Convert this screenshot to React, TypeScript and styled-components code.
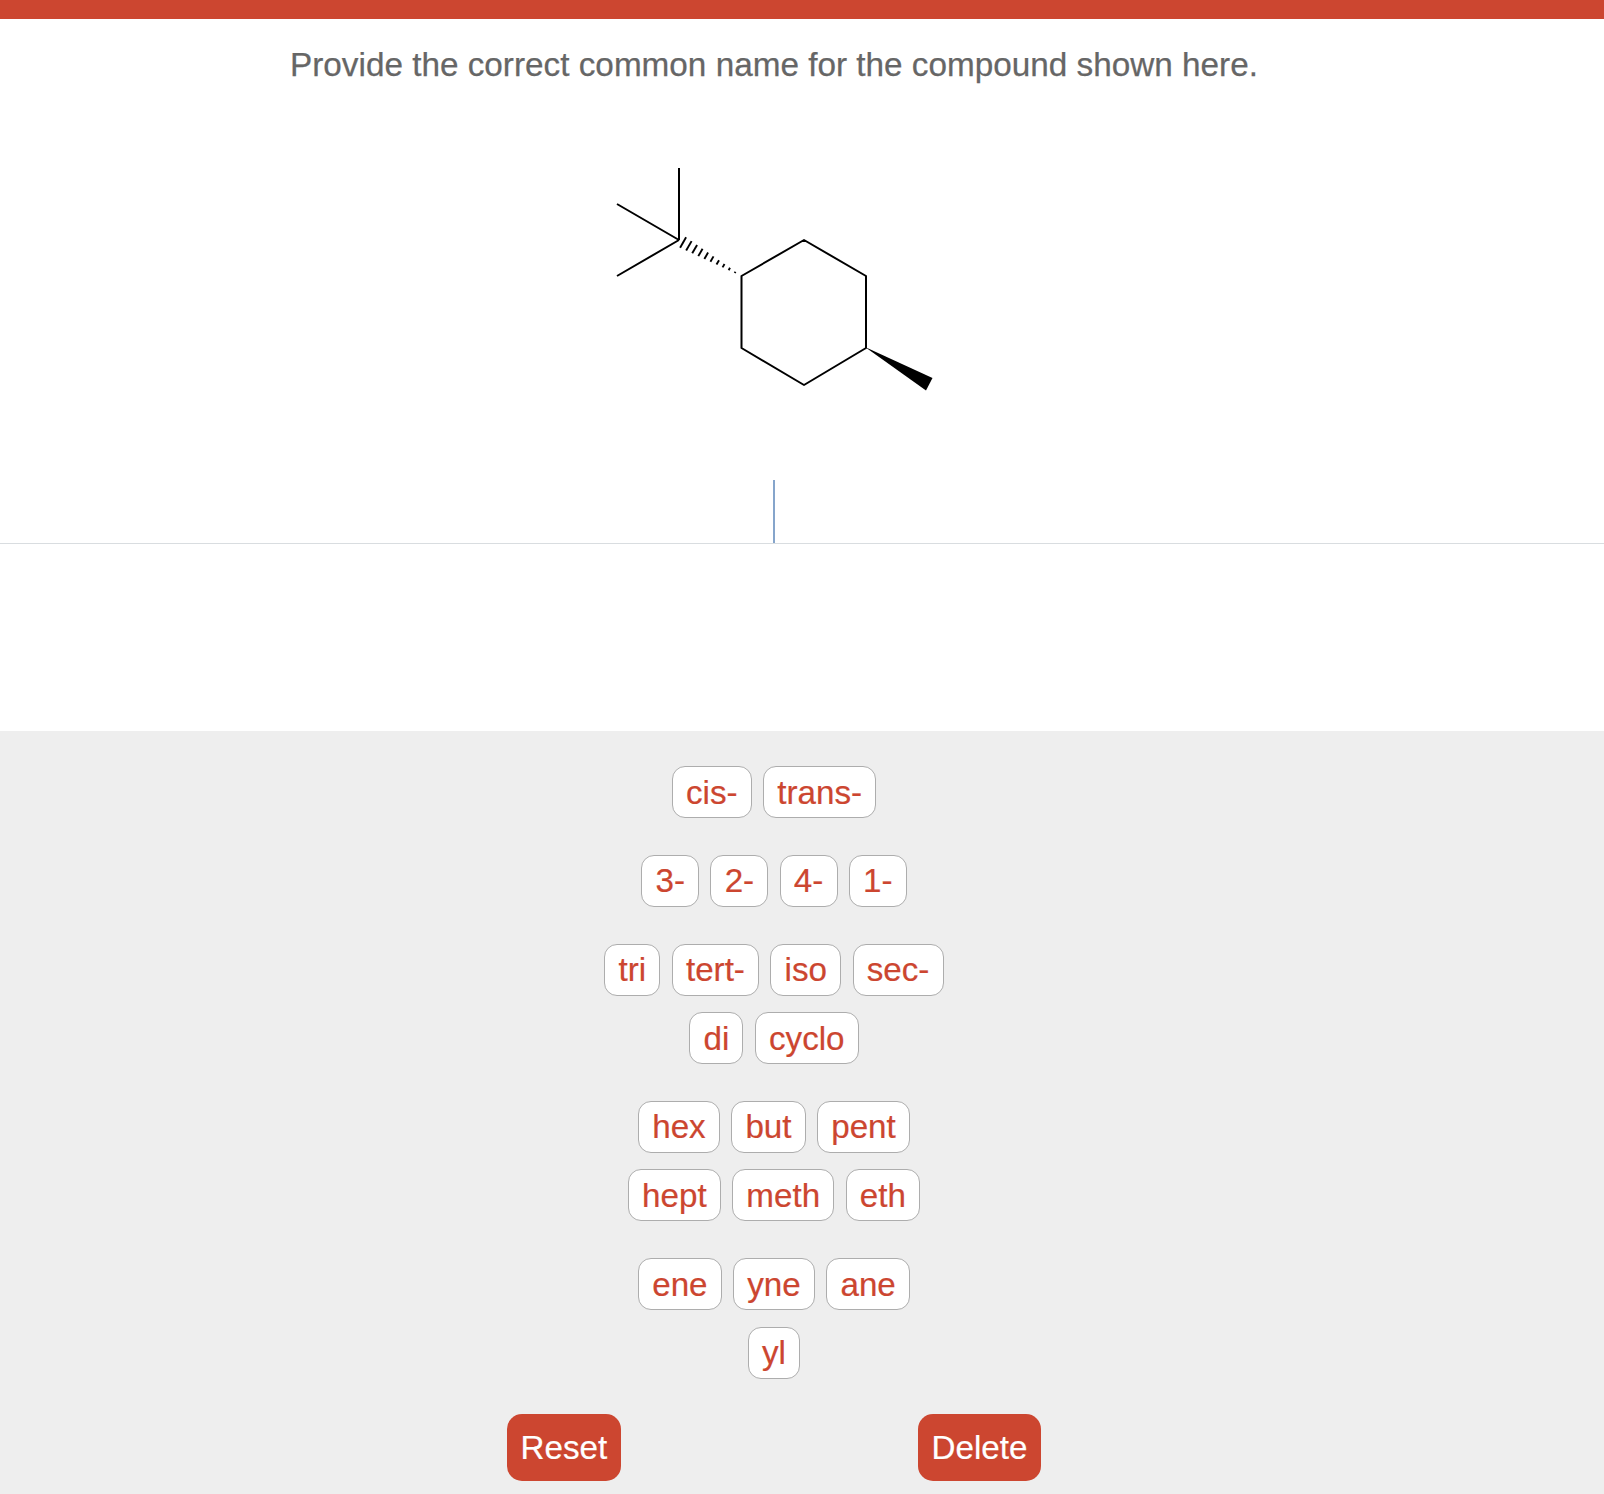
import React from 'react';
import styled, { createGlobalStyle } from 'styled-components';

const GlobalStyle = createGlobalStyle`
  html, body {
    margin: 0;
    padding: 0;
    background: #fff;
    font-family: "Liberation Sans", Arial, sans-serif;
  }
`;

const Page = styled.div`
  width: 1604px;
  height: 1494px;
  overflow: hidden;
  display: flex;
  flex-direction: column;
`;

const TopBar = styled.div`
  height: 19px;
  background: #cc4630;
`;

const Prompt = styled.h1`
  margin: 0;
  padding: 26px 56px 0 0;
  height: 39px;
  font-size: 33.3px;
  line-height: 40px;
  font-weight: 400;
  color: #666;
  text-align: center;
  -webkit-text-stroke: 0.25px #666;
`;

const Figure = styled.div`
  display: flex;
  justify-content: center;
  padding: 76px 56px 0 0;
`;

const AnswerLine = styled.div`
  height: 63px;
  margin-top: 80px;
  padding-right: 56px;
  border-bottom: 1px solid #d9dde0;
  display: flex;
  justify-content: center;
`;

const Caret = styled.div`
  width: 1.5px;
  height: 100%;
  background: #86a5cb;
`;

const Panel = styled.div`
  flex: 1;
  margin-top: 187px;
  padding: 35.2px 56px 0 0;
  background: #eee;
  display: flex;
  flex-direction: column;
  align-items: center;
  gap: 36.7px;
`;

const Group = styled.div`
  display: flex;
  flex-direction: column;
  gap: 16.6px;
`;

const Row = styled.div`
  display: flex;
  justify-content: center;
  gap: 11.3px;
`;

const Chip = styled.button`
  box-sizing: border-box;
  height: 52px;
  padding: 0 13.2px;
  background: #fff;
  border: 1px solid #adadad;
  border-radius: 13px;
  font-family: inherit;
  font-size: 33.2px;
  line-height: 1;
  color: #cc4630;
  -webkit-text-stroke: 0.2px #cc4630;
`;

const Actions = styled.div`
  display: flex;
  justify-content: center;
  gap: 297px;
  margin-top: -1px;
`;

const ActionButton = styled.button`
  box-sizing: border-box;
  height: 67px;
  padding: 0 13.7px;
  background: #cc4630;
  border: none;
  border-radius: 15px;
  font-family: inherit;
  font-size: 33.2px;
  line-height: 1;
  color: #fff;
  -webkit-text-stroke: 0.2px #fff;
`;

const hashStrokes = Array.from({ length: 10 }, (_, i) => {
  const t = 0.07 + i * 0.092;
  const half = 6 - i * 0.58;
  const x = 64.7 + 62.8 * t;
  const y = 80 + 36 * t;
  const nx = 0.5;
  const ny = -0.866;
  return { x1: x - nx * half, y1: y - ny * half, x2: x + nx * half, y2: y + ny * half };
});

const Molecule: React.FC = () => (
  <svg width="320" height="240" viewBox="0 0 320 240" fill="none" stroke="#000" strokeWidth="2">
    <path d="M65 8V80M3 44L65 80M3 116L65 80" />
    <path d="M127.5 116L190 80L252 116V188L190 225L127.5 188Z" strokeLinejoin="round" />
    {hashStrokes.map((s, i) => (
      <line key={i} x1={s.x1} y1={s.y1} x2={s.x2} y2={s.y2} strokeWidth="1.9" />
    ))}
    <polygon points="251,187 318.5,218 312,230.5" fill="#000" stroke="none" />
  </svg>
);

const chipGroups: string[][][] = [
  [['cis-', 'trans-']],
  [['3-', '2-', '4-', '1-']],
  [['tri', 'tert-', 'iso', 'sec-'], ['di', 'cyclo']],
  [['hex', 'but', 'pent'], ['hept', 'meth', 'eth']],
  [['ene', 'yne', 'ane'], ['yl']],
];

const App: React.FC = () => (
  <Page>
    <GlobalStyle />
    <TopBar />
    <Prompt>Provide the correct common name for the compound shown here.</Prompt>
    <Figure>
      <Molecule />
    </Figure>
    <AnswerLine>
      <Caret />
    </AnswerLine>
    <Panel>
      {chipGroups.map((rows, g) => (
        <Group key={g}>
          {rows.map((chips, r) => (
            <Row key={r}>
              {chips.map(c => (
                <Chip key={c}>{c}</Chip>
              ))}
            </Row>
          ))}
        </Group>
      ))}
      <Actions>
        <ActionButton>Reset</ActionButton>
        <ActionButton>Delete</ActionButton>
      </Actions>
    </Panel>
  </Page>
);

export default App;
